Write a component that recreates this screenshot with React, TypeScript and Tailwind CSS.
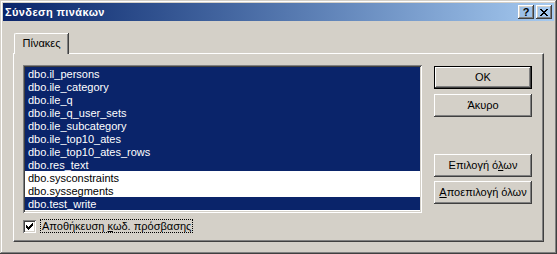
import React from 'react'

const raised =
  'shadow-[inset_-1px_-1px_0_#404040,inset_1px_1px_0_#ffffff,inset_-2px_-2px_0_#808080,inset_2px_2px_0_#d4d0c8]'
const sunken =
  'shadow-[inset_1px_1px_0_#808080,inset_-1px_-1px_0_#ffffff,inset_2px_2px_0_#404040,inset_-2px_-2px_0_#d4d0c8]'

const tables = [
  { name: 'dbo.il_persons', on: true },
  { name: 'dbo.ile_category', on: true },
  { name: 'dbo.ile_q', on: true },
  { name: 'dbo.ile_q_user_sets', on: true },
  { name: 'dbo.ile_subcategory', on: true },
  { name: 'dbo.ile_top10_ates', on: true },
  { name: 'dbo.ile_top10_ates_rows', on: true },
  { name: 'dbo.res_text', on: true },
  { name: 'dbo.sysconstraints', on: false },
  { name: 'dbo.syssegments', on: false },
  { name: 'dbo.test_write', on: true },
]

function Btn({ children, isDefault, className }: { children: React.ReactNode; isDefault?: boolean; className?: string }) {
  if (isDefault) {
    return (
      <div className={`w-[98px] h-[23px] border border-black ${className ?? ''}`}>
        <div className={`w-full h-full flex items-center justify-center ${raised}`}>{children}</div>
      </div>
    )
  }
  return (
    <div className={`w-[98px] h-[23px] flex items-center justify-center ${raised} ${className ?? ''}`}>{children}</div>
  )
}

export default function App() {
  return (
    <div
      className="w-[557px] h-[254px] bg-[#d4d0c8] text-black text-[11px] leading-[13px] overflow-hidden"
      style={{ fontFamily: '"Liberation Sans", Arial, sans-serif' }}
    >
      <div className="w-full h-full shadow-[inset_-1px_-1px_0_#404040,inset_1px_1px_0_#d4d0c8,inset_-2px_-2px_0_#808080,inset_2px_2px_0_#ffffff] p-[3px] flex flex-col">
        {/* title bar */}
        <div className="h-[18px] flex items-center justify-between bg-gradient-to-r from-[#0a246a] to-[#a6caf0] pl-[2px] pr-[2px]">
          <span className="text-white font-bold text-[11px] tracking-[0.4px]">Σύνδεση πινάκων</span>
          <div className="flex gap-[2px]">
            <div className={`w-[16px] h-[14px] flex items-center justify-center ${raised}`}>
              <span className="font-bold text-[11px] leading-none">?</span>
            </div>
            <div className={`w-[16px] h-[14px] flex items-center justify-center ${raised}`}>
              <svg width="8" height="7" viewBox="0 0 8 7">
                <path d="M0 0h2v1h-2zM6 0h2v1h-2zM1 1h2v1h-2zM5 1h2v1h-2zM2 2h4v1h-4zM3 3h2v1h-2zM2 4h4v1h-4zM1 5h2v1h-2zM5 5h2v1h-2zM0 6h2v1h-2zM6 6h2v1h-2z" fill="#000" />
              </svg>
            </div>
          </div>
        </div>

        {/* tab strip */}
        <div className="pl-[10px] pt-[12px]">
          <div className="flex">
            <div className="relative z-10 ml-[1px] w-[54px] h-[21px] -mb-[1px] bg-[#d4d0c8] border-t border-l border-white rounded-tl-[2px] shadow-[inset_-1px_0_0_#808080,1px_0_0_#404040] flex items-center justify-center pb-[1px]">
              Πίνακες
            </div>
          </div>
          <div className="w-[531px] h-[189px] border border-white border-r-[#404040] border-b-[#404040] shadow-[inset_-1px_-1px_0_#808080]">
            <div className="flex pl-[9px] pt-[11px]">
              <div className={`w-[399px] h-[148px] bg-white p-[2px] ${sunken}`}>
                {tables.map((t) => (
                  <div
                    key={t.name}
                    className={`h-[13px] pl-[3px] pt-[1px] whitespace-nowrap ${t.on ? 'bg-[#0a246a] text-white' : 'bg-white text-black'}`}
                  >
                    {t.name}
                  </div>
                ))}
              </div>
              <div className="ml-[12px] pt-[1px] flex flex-col">
                <Btn isDefault>OK</Btn>
                <Btn className="mt-[5px]">Άκυρο</Btn>
                <Btn className="mt-[37px]">
                  <span>
                    Επιλογή ό<u>λ</u>ων
                  </span>
                </Btn>
                <Btn className="mt-[4px]">
                  <span>
                    <u>Α</u>ποεπιλογή όλων
                  </span>
                </Btn>
              </div>
            </div>
            <div className="flex items-center pl-[9px] mt-[6px]">
              <div className={`w-[13px] h-[13px] bg-white flex items-center justify-center ${sunken}`}>
                <svg width="7" height="7" viewBox="0 0 7 7">
                  <path d="M6 0h1v3h-1zM5 1h1v3h-1zM4 2h1v3h-1zM3 3h1v3h-1zM2 4h1v3h-1zM1 3h1v3h-1zM0 2h1v3h-1z" fill="#000" />
                </svg>
              </div>
              <div className="ml-[4px] h-[14px] px-[1px] border border-dotted border-black flex items-center whitespace-nowrap">
                <span>
                  Αποθήκευση <u>κ</u>ωδ. πρόσβασης
                </span>
              </div>
            </div>
          </div>
        </div>
      </div>
    </div>
  )
}
